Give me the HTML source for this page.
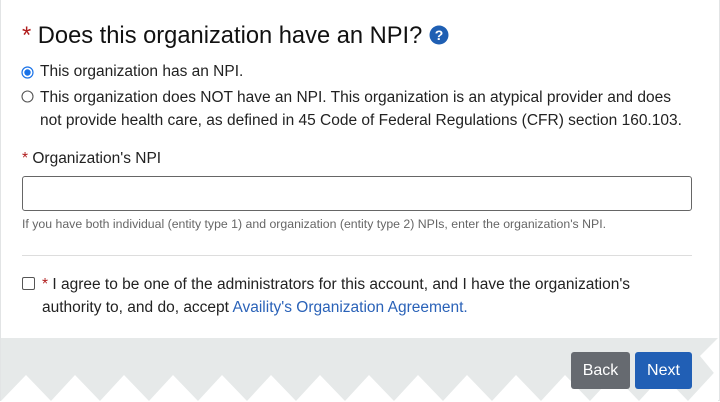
<!DOCTYPE html>
<html><head><style>
body{margin:0;width:720px;height:402px;overflow:hidden;background:#fff;font-family:"Liberation Sans",sans-serif;color:#222;position:relative}
.card{position:absolute;left:0;top:0;width:718px;height:400px;border:1px solid #e2e4e5;border-top:none;background:#fff}
.t{position:absolute;white-space:nowrap}
.r{color:#b01c1c}
</style></head><body>
<div class="card"></div>
<div class="t" style="left:22px;top:23px;font-size:23.7px;color:#111"><span class="r">*</span> Does this organization have an NPI? <svg width="20" height="20" viewBox="0 0 20 20" style="vertical-align:-2px"><circle cx="10" cy="10" r="9.5" fill="#1f5fb3"/><text x="10" y="15" font-size="14" font-weight="bold" fill="#fff" text-anchor="middle" font-family="Liberation Sans">?</text></svg></div>
<svg class="t" style="left:21px;top:66px" width="13" height="13"><circle cx="6.5" cy="6.5" r="5.5" fill="#fff" stroke="#1a73e8" stroke-width="1.2"/><circle cx="6.5" cy="6.5" r="3.2" fill="#1a73e8"/></svg>
<div class="t" style="left:40px;top:63px;font-size:15.5px">This organization has an NPI.</div>
<svg class="t" style="left:21px;top:90px" width="13" height="13"><circle cx="6.5" cy="6.5" r="5.5" fill="#fff" stroke="#555" stroke-width="1.1"/></svg>
<div class="t" style="left:40px;top:86px;font-size:15.5px;line-height:23px">This organization does NOT have an NPI. This organization is an atypical provider and does<br>not provide health care, as defined in 45 Code of Federal Regulations (CFR) section 160.103.</div>
<div class="t" style="left:22px;top:150px;font-size:15.5px"><span class="r">*</span> Organization's NPI</div>
<div class="t" style="left:22px;top:176px;width:668px;height:33px;border:1px solid #666;border-radius:3px"></div>
<div class="t" style="left:22px;top:217px;font-size:12.3px;color:#666">If you have both individual (entity type 1) and organization (entity type 2) NPIs, enter the organization's NPI.</div>
<div class="t" style="left:22px;top:255px;width:670px;height:1px;background:#ddd"></div>
<div class="t" style="left:22px;top:277px;width:11px;height:11px;border:1px solid #555;border-radius:2px"></div>
<div class="t" style="left:42px;top:273px;font-size:15.5px;line-height:23px"><span class="r">*</span> I agree to be one of the administrators for this account, and I have the organization's<br>authority to, and do, accept <span style="color:#2a62b8">Availity's Organization Agreement.</span></div>
<svg class="t" style="left:0;top:338px" width="720" height="64">
<rect x="1" y="0" width="717" height="63" fill="#e6e9e9"/>
<polygon fill="#fff" points="1,63 26,37 51,63 75,37 100,63 124,37 149,63 173,37 198,63 222,37 247,63 271,37 296,63 320,37 345,63 369,37 394,63 418,37 443,63 467,37 492,63 516,37 541,63 565,37 590,63 614,37 639,63 663,37 688,63 712,37 718,30 718,63"/>
<polygon fill="#fff" points="718,0 700,18 718,40"/>
</svg>
<div class="t" style="left:571px;top:352px;width:59px;height:37px;background:#666a70;border-radius:3px;color:#fff;font-size:16px;line-height:37px;text-align:center">Back</div>
<div class="t" style="left:635px;top:352px;width:57px;height:37px;background:#215fb5;border-radius:3px;color:#fff;font-size:16px;line-height:37px;text-align:center">Next</div>
<svg class="t" style="left:571px;top:375px" width="125" height="27"><polygon fill="#fff" points="44,26 51,17 58,26"/><polygon fill="#fff" points="87,26 94,17 101,26"/></svg>
</body></html>
